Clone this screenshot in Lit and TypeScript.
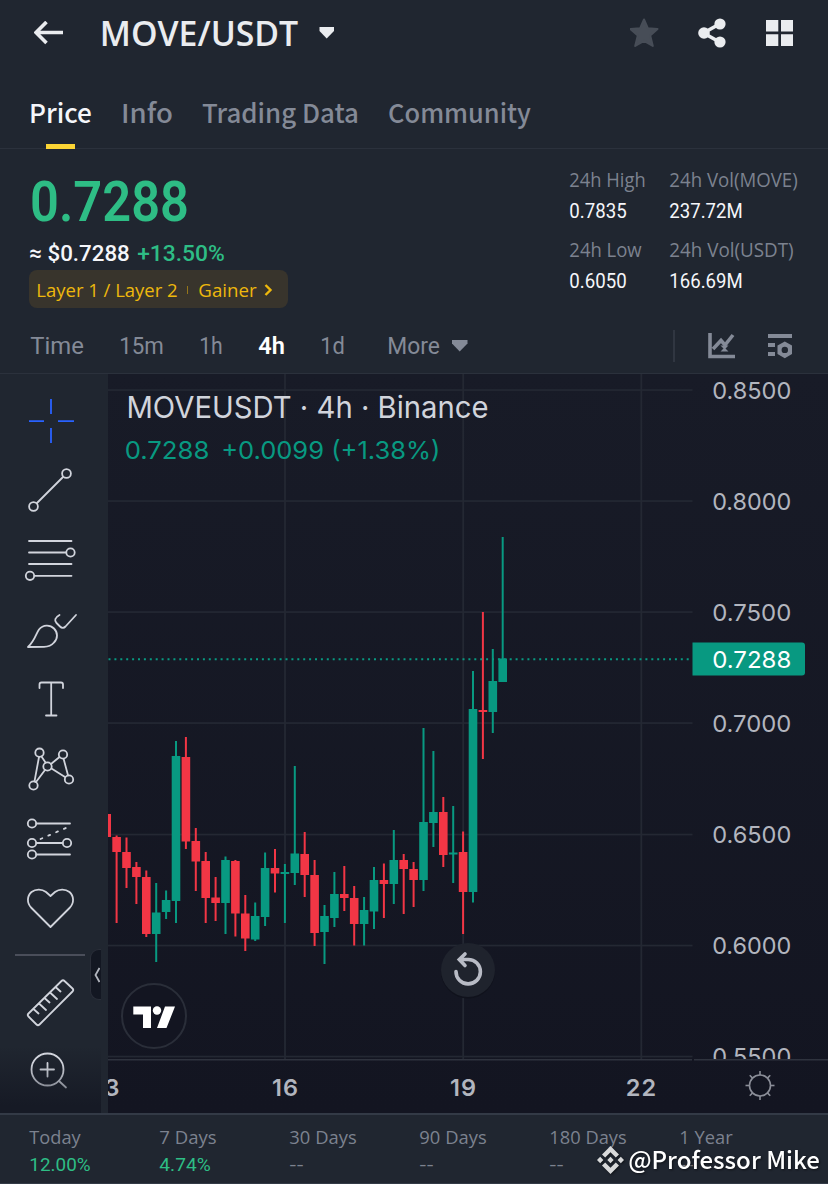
import { LitElement, html, css, svg } from "lit";
import { customElement, state } from "lit/decorators.js";

/** Text fitted to a given ink width; the box height equals the cap height, so its bottom is the baseline. */
const label = (text: string, width: number, size: number, cls = "") => {
  const cap = Math.round(size * 0.715);
  const bearing = size * 0.035;
  return html`<svg class="label ${cls}" width=${width} height=${cap}>
    <text x=${-bearing} y=${cap} font-size=${size} textLength=${width + bearing * 2} lengthAdjust="spacingAndGlyphs">${text}</text>
  </svg>`;
};

// [high, low, body top, body bottom, rising]
const CANDLES: [number, number, number, number, number][] = [
  [835.5, 923, 837, 852, 0], [837.5, 888, 852, 868, 0], [862, 904, 867, 877, 0], [870.5, 937, 877, 934, 0],
  [883, 962, 912.5, 934, 1], [890.5, 919, 900, 912, 1], [741, 923, 756, 901, 1], [737, 849, 757, 841.5, 0],
  [828, 891, 841, 861.5, 0], [852, 923, 861, 898, 0], [877, 921, 897.5, 903, 0], [856.5, 934, 860, 903, 1],
  [860, 936.5, 861, 913.5, 0], [895, 951, 913.5, 938.5, 0], [902.5, 941, 916, 939.5, 1], [852.5, 926, 868, 917, 1],
  [849, 892.5, 868, 873.5, 0], [864, 923, 872, 874, 1], [766, 885, 853.5, 873, 1], [832, 897, 854, 875, 0],
  [860, 946, 875, 933, 0], [905, 964, 916, 932, 1], [872, 927, 894, 918, 1], [866, 911, 894, 898, 0],
  [886, 945.5, 898, 924, 0], [897, 945.5, 910, 924, 1], [867, 929, 880, 911.5, 1], [863.5, 918, 880, 884, 0],
  [830, 904, 860, 884, 1], [854, 914, 860, 869, 0], [862, 907, 869, 880, 0], [728, 891, 822, 880, 1],
  [751, 847, 812, 823, 1], [797, 867, 812, 855, 0], [806, 883, 852.5, 854.5, 1], [831.5, 934, 852, 892, 0],
  [671, 902.5, 709, 892, 1], [612, 759, 710, 712, 0], [649, 733, 681, 712, 1], [537, 682, 658.5, 682, 1],
];

const PRICES: [string, number][] = [
  ["0.8500", 390], ["0.8000", 501], ["0.7500", 612], ["0.7000", 723], ["0.6500", 834.5], ["0.6000", 945.5], ["0.5500", 1056.5],
];

const TOOLS = [
  svg`<g class="active"><path d="M51 399V414M51 428V443M29 421.2H44M58 421.2H74"/></g>`,
  svg`<circle cx="66.5" cy="473" r="4.4"/><circle cx="33.5" cy="506" r="4.4"/><path d="M37 502.5L63 476.5"/>`,
  svg`<path d="M29 541H71.500M29 552.500H66M29 564H71.500M34.500 575.800H71.500"/><circle cx="70.500" cy="552.500" r="4.200"/><circle cx="30" cy="575.800" r="4.200"/>`,
  svg`<path d="M28 646.500C35 640 36 633 39 629C43 624 50 624 54 628C58 632 58 638 54 642C51.500 645 48 646.300 44 646.300Z"/><path d="M59.500 614.500C55 617 54 620 56.500 622.500L60 626C62 628 64 627.500 65.500 626L76 614.500"/>`,
  svg`<path d="M39.500 688V684.500Q39.500 682.500 41.500 682.500H61Q63 682.500 63 684.500V688M51.200 682.500V715.500M46 715.500H56.500"/>`,
  svg`<circle cx="39.500" cy="752.200" r="4.200"/><circle cx="63" cy="754" r="4.200"/><circle cx="47.500" cy="766" r="4.200"/><circle cx="33.500" cy="785" r="4.200"/><circle cx="69" cy="779" r="4.200"/><path d="M39 756.500L34.500 780.800M41.500 756L45.500 762M51 763.500L59.500 756.500M63.600 758.300L68 774.800M51.500 768L65 776.500M45 769.500L36 781.500"/>`,
  svg`<circle cx="32" cy="823.500" r="4.200"/><circle cx="32" cy="843" r="4.200"/><circle cx="67" cy="843" r="4.200"/><circle cx="32" cy="854.500" r="4.200"/><path d="M36.300 823.500H70M36.300 843H62.700M36.300 854.500H70"/><path d="M40.500 839L67 827.500" stroke-dasharray="2 6.500"/>`,
  svg`<path d="M50.500 926.500L31.500 907.500C26.500 902.500 27 895.500 31.500 891.500C36 888 42 888.500 46 891.500L50.500 895.500L55 891.500C59 888.500 65 888 69.500 891.500C74 895.500 74.500 902.500 69.500 907.500Z"/>`,
];

const LOWER_TOOLS = [
  svg`<path d="M28.500 1013.500L61.500 981Q63 979.500 64.500 981L72.500 988.500Q74 990 72.500 991.500L39.500 1024.500Q38 1026 36.500 1024.500L28.500 1016.500Q27 1015 28.500 1013.500ZM33.500 1009L38.500 1013.500M39 1003.500L46 1010M44.500 998L49.500 1002.500M50 992.500L57 999M55.500 987L60.500 991.500"/>`,
  svg`<g stroke="url(#fade)"><circle cx="47.500" cy="1069.500" r="16"/><path d="M59 1081L66 1087.500M40.500 1069.500H54M47.500 1063V1076.500"/></g>
    <defs><linearGradient id="fade" gradientUnits="userSpaceOnUse" x1="0" y1="1062" x2="0" y2="1090"><stop stop-color="#d1d4dc"/><stop offset="1" stop-color="#81858f"/></linearGradient></defs>`,
];

@customElement("app-root")
export class AppRoot extends LitElement {
  @state() private tab = "Price";
  @state() private frame = "4h";

  static styles = css`
    :host {
      display: flex; flex-direction: column; width: 828px; height: 1184px; overflow: hidden;
      background: #202630; color: #eaecef; position: relative;
      font-family: "Open Sans", "Noto Sans", sans-serif;
    }
    * { box-sizing: border-box; }
    svg { display: block; flex: none; }
    .label { overflow: visible; fill: currentColor; }
    .num { font-family: Roboto, "Liberation Sans", sans-serif; }
    .medium { font-weight: 500; }
    .semi { font-weight: 600; }
    .top { height: 68px; display: flex; align-items: center; padding: 0 34px 2px; }
    .title { margin: 2px 0 0 37px; }
    .caret { margin-left: 22px; }
    .actions { margin-left: auto; display: flex; align-items: center; gap: 38px; }
    .tabs { height: 81px; display: flex; gap: 31px; padding: 36px 0 0 30px; border-bottom: 1px solid #2b313c; }
    .tab { height: 45px; display: flex; flex-direction: column; justify-content: space-between; align-items: center; color: #848a97; font-family: "Noto Sans CJK SC", "Noto Sans", sans-serif; font-weight: 500; }
    .tab.on { color: #f5f6fa; }
    .tab.on::after { content: ""; width: 29px; height: 5px; background: #fcd535; }
    .summary { height: 168px; display: flex; justify-content: space-between; padding: 24px 30px 0; }
    .price { margin: 9px 0 0 2px; color: #2ebd85; }
    .line { display: flex; gap: 9px; margin-top: 24px; color: #f5f6fa; }
    .green { color: #2ebd85; }
    .pill { width: 259px; height: 38px; border-radius: 8px; background: #38342c; color: #eeb80c; display: flex; align-items: center; padding: 1px 0 0 8px; margin: 9px 0 0 -1px; }
    .pill i { width: 1px; height: 8px; background: #94751a; margin: 0 11px 0 10px; }
    .chev { margin-left: 8px; }
    .stats { width: 228px; display: grid; grid-template-columns: 100px 128px; grid-template-rows: 70px 70px; }
    .stat { color: #7c828f; }
    .stat .num { margin-top: 17px; color: #f5f6fa; }
    .frames { height: 57px; display: flex; align-items: center; padding: 1px 34px 0 31px; border-bottom: 1px solid #2b313c; color: #848a97; }
    .frame { margin-right: 37px; }
    .frame.on { color: #fff; font-weight: 600; }
    .more { display: flex; align-items: center; gap: 13px; margin-left: 7px; }
    .rule { width: 2px; height: 32px; background: #303641; margin-left: auto; }
    .overlay { margin-left: 33px; }
    .settings { margin-left: 32px; }
    .board { height: 739px; display: flex; }
    .tools { width: 101px; position: relative; display: flex; flex-direction: column; padding-top: 12px; background: linear-gradient(#202630 91%, #161a25 99%); }
    .tools > svg { fill: none; stroke: #d1d4dc; stroke-width: 1.8; stroke-linecap: round; stroke-linejoin: round; }
    .active { stroke: #2962ff; stroke-linecap: butt; }
    .divider { height: 2px; margin: 12px 16px 12px 15px; background: #4a4e5a; }
    .handle { position: absolute; right: 0; top: 575px; width: 11px; height: 51px; border-radius: 9px 0 0 9px; background: #131722; border: 1px solid #2a2e39; border-right: 0; display: flex; align-items: center; padding-left: 3px; }
    .plot { margin-left: 7px; width: 720px; background: linear-gradient(#181b27, #131521); font-family: Inter, "Liberation Sans", sans-serif; }
    .periods { height: 71px; border-top: 2px solid #333a46; border-bottom: 1px solid #333a46; display: grid; grid-template-columns: repeat(6, 130px); padding: 16px 0 0 30px; color: #7c828f; overflow: hidden; }
    .period .label + .label { margin-top: 14px; }
    .credit { position: absolute; left: 597px; top: 1146px; display: flex; align-items: center; gap: 5px; color: #fff; filter: drop-shadow(1px 1px 1px #0008); }
    .credit .label { font-family: "Noto Sans CJK SC", "Noto Sans", sans-serif; }
  `;

  private grid() {
    return svg`<g fill="#242833">
      ${PRICES.map(([, y]) => svg`<rect x="108" y=${y - 0.8} width="584.500" height="1.700"/>`)}
      ${[285, 463.2, 641.3].map((x) => svg`<rect x=${x - 0.9} y="374" width="1.800" height="685"/>`)}
    </g>`;
  }

  private candles() {
    return svg`<rect x="108" y="814" width="3" height="23" fill="#f23645"/>
      ${CANDLES.map(([hi, lo, top, bottom, up], i) => {
        const x = 116.6 + 9.9 * i;
        return svg`<g fill=${up ? "#089981" : "#f23645"}>
          <rect x=${x - 1} y=${hi} width="2" height=${lo - hi}/>
          <rect x=${x - 4.3} y=${top} width="8.600" height=${bottom - top}/></g>`;
      })}`;
  }

  private plot() {
    const fit = (t: string, x: number, y: number, w: number, size: number, fill: string) =>
      svg`<text x=${x - size * 0.035} y=${y} font-size=${size} fill=${fill} textLength=${w + size * 0.07} lengthAdjust="spacingAndGlyphs">${t}</text>`;
    const day = (t: string, x: number) =>
      svg`<text x=${x + 0.5} y="1096" font-size="23.500" fill="#b2b5be" font-weight="600" letter-spacing="1" text-anchor="middle">${t}</text>`;
    return html`<div class="plot">
      <svg width="720" height="685" viewBox="108 374 720 685">
        ${this.grid()}
        ${this.candles()}
        <path d="M108.500 659.300H692" stroke="#089981" stroke-width="2" stroke-dasharray="2 3.900"/>
        ${fit("MOVEUSDT · 4h · Binance", 127.5, 417.5, 360, 30, "#d1d4dc")}
        ${fit("0.7288", 125.5, 459, 83, 24.5, "#089981")}
        ${fit("+0.0099 (+1.38%)", 222, 459, 217.5, 24.5, "#089981")}
        ${PRICES.map(([t, y]) => fit(t, 713, y + 8.6, 77.5, 23.5, "#b2b5be"))}
        <path d="M692.500 642.500H802Q805 642.500 805 645.500V672.500Q805 675.500 802 675.500H692.500Z" fill="#089981"/>
        ${fit("0.7288", 713, 667.5, 77.5, 23.5, "#ffffff")}
        <circle cx="154" cy="1016" r="32" fill="#131521" stroke="#2a2e39" stroke-width="2"/>
        <path d="M133.300 1006.500H151V1028H143V1014.500H133.300ZM165 1006.500H175L166.500 1028H157Z" fill="#fff"/>
        <circle cx="157" cy="1010.500" r="4.200" fill="#fff"/>
        <circle cx="468" cy="971.500" r="27" fill="#10121c"/>
        <circle cx="468" cy="970" r="27" fill="#1f232d"/>
        <path d="M456 971.500A12.200 12.200 0 1 0 468.200 959.500H460M465 954L459.300 959.500L465 965.500" fill="none" stroke="#b8bbc5" stroke-width="3.600" stroke-linecap="round"/>
      </svg>
      <svg width="720" height="54" viewBox="108 1059 720 54">
        <path d="M108 1059.800H692M694 1059.800H828" stroke="#2f333e" stroke-width="1.600"/>
        ${day("13", 106.5)}${day("16", 285)}${day("19", 463)}${day("22", 641)}
        <g fill="none" stroke="#8b8e98" stroke-width="1.600" transform="translate(760 1085.500)">
          <circle r="10.500"/>
          ${[0, 45, 90, 135, 180, 225, 270, 315].map((a) => svg`<path d="M0 -10.500V-14.500" transform="rotate(${a})"/>`)}
        </g>
      </svg>
    </div>`;
  }

  render() {
    const tabs: [string, number][] = [["Price", 61], ["Info", 50], ["Trading Data", 155], ["Community", 141]];
    const frames: [string, number][] = [["Time", 52], ["15m", 43], ["1h", 22], ["4h", 25], ["1d", 23]];
    const stats: [string, number, string, number][] = [
      ["24h High", 75, "0.7835", 56], ["24h Vol(MOVE)", 127, "237.72M", 72],
      ["24h Low", 71, "0.6050", 56], ["24h Vol(USDT)", 123, "166.69M", 72],
    ];
    const periods: [string, number, string, number][] = [
      ["Today", 50, "12.00%", 60], ["7 Days", 56, "4.74%", 50], ["30 Days", 66, "--", 13],
      ["90 Days", 66, "--", 13], ["180 Days", 76, "--", 13], ["1 Year", 52, "--", 13],
    ];
    return html`
      <header class="top">
        <svg width="30" height="24" viewBox="34 21 30 24"><path d="M63 32.500H37M46.500 22L36 32.500L46.500 43" fill="none" stroke="#eaecef" stroke-width="3.600"/></svg>
        <div class="title">${label("MOVE/USDT", 196, 33.5, "semi")}</div>
        <svg class="caret" width="16" height="12" viewBox="0 0 16 12"><path d="M.5 0H15V4L7.700 11.500L.5 4Z" fill="#eaecef"/></svg>
        <div class="actions">
          <svg width="30" height="30" viewBox="1 0 30 30"><path d="M15 1.500L18.800 10.200L28.500 11L21.200 17.400L23.800 28L15 22.800L6.200 28L8.800 17.400L1.500 11L11.200 10.200Z" fill="#474d57" stroke="#474d57" stroke-width="2" stroke-linejoin="round"/></svg>
          <svg width="30" height="30" viewBox="2 0 30 30"><path d="M23.500 6L7.500 15L23.500 24" fill="none" stroke="#eaecef" stroke-width="3.600"/><circle cx="24" cy="6" r="5.600" fill="#eaecef"/><circle cx="8" cy="15" r="5.800" fill="#eaecef"/><circle cx="24" cy="24" r="5.600" fill="#eaecef"/></svg>
          <svg width="28" height="28" viewBox="0 0 28 28"><path d="M0 1H12.300V12.500H0ZM15 1H27V12.500H15ZM0 15.300H12.300V27H0ZM15 15.300H27V27H15Z" fill="#eaecef"/></svg>
        </div>
      </header>
      <nav class="tabs">
        ${tabs.map(([t, w]) => html`<div class="tab ${t === this.tab ? "on" : ""}" @click=${() => (this.tab = t)}>${label(t, w, 26)}</div>`)}
      </nav>
      <section class="summary">
        <div>
          <div class="price">${label("0.7288", 155, 55, "num semi")}</div>
          <div class="line">${label("≈ $0.7288", 99, 22.7, "num medium")}${label("+13.50%", 86, 22.7, "num medium green")}</div>
          <div class="pill">${label("Layer 1 / Layer 2", 140, 19)}<i></i>${label("Gainer", 57, 19)}
            <svg class="chev" width="9" height="12" viewBox="0 0 9 12"><path d="M1.500 1L6.500 6L1.500 11" fill="none" stroke="#eeb80c" stroke-width="2.400"/></svg>
          </div>
        </div>
        <div class="stats">
          ${stats.map(([k, kw, v, vw]) => html`<div class="stat">${label(k, kw, 19.3)}${label(v, vw, 19.6, "num")}</div>`)}
        </div>
      </section>
      <nav class="frames">
        ${frames.map(([t, w]) => html`<div class="frame ${t === this.frame ? "on" : ""}" @click=${() => (this.frame = t)}>${label(t, w, 23, "num")}</div>`)}
        <div class="more">
          ${label("More", 51, 23, "num")}
          <svg width="16" height="12" viewBox="0 0 16 12"><path d="M0 0H15.500V3.500L7.700 11.500L0 3.500Z" fill="#848a97"/></svg>
        </div>
        <div class="rule"></div>
        <svg class="overlay" width="28" height="28" viewBox="0 0 28 28"><path d="M2 1V24.500H27M5 17L13 8.500L17 13L25 3" fill="none" stroke="#848a97" stroke-width="3.600"/><path d="M12.500 13.500H20.500L17.500 16.500L20.500 19.500H12.500L15.500 16.500Z" fill="#848a97"/></svg>
        <svg class="settings" width="26" height="28" viewBox="0 0 26 28"><path d="M0 2H24V6H0ZM0 11H7V15H0ZM0 20H7V24H0Z" fill="#848a97"/><path d="M16.800 9.500L24 13.500V22L16.800 26.300L9.500 22V13.500ZM16.800 14.700A3.200 3.200 0 1 0 16.800 21.100A3.200 3.200 0 1 0 16.800 14.700Z" fill="#848a97" fill-rule="evenodd"/></svg>
      </nav>
      <main class="board">
        <aside class="tools">
          ${TOOLS.map((t, i) => html`<svg width="100" height="69.5" viewBox="0 ${386 + 69.5 * i} 100 69.5">${t}</svg>`)}
          <div class="divider"></div>
          ${LOWER_TOOLS.map((t, i) => html`<svg width="100" height="69" viewBox="0 ${968 + 69 * i} 100 69">${t}</svg>`)}
          <div class="handle"><svg width="6" height="16" viewBox="0 0 6 16"><path d="M5.500 1L1.500 8L5.500 15" fill="none" stroke="#b2b5be" stroke-width="1.800"/></svg></div>
        </aside>
        ${this.plot()}
      </main>
      <footer class="periods">
        ${periods.map(([k, kw, v, vw]) => html`<div class="period">${label(k, kw, 18.8)}${label(v, vw, 18.8, v === "--" ? "" : "num green")}</div>`)}
      </footer>
      <div class="credit">
        <svg width="27" height="28" viewBox="0 0 27 28" fill="#d8d9da"><path d="M13.500 0L22 8.500L18.800 11.500L13.500 6.300L8.200 11.500L5 8.500ZM13.500 28L22 19.500L18.800 16.500L13.500 21.700L8.200 16.500L5 19.500ZM3.200 10.800L6.400 14L3.200 17.200L0 14ZM23.800 10.800L27 14L23.800 17.200L20.600 14ZM13.500 10.800L16.700 14L13.500 17.200L10.300 14Z"/></svg>
        ${label("@Professor Mike", 190, 24, "medium")}
      </div>
    `;
  }
}
